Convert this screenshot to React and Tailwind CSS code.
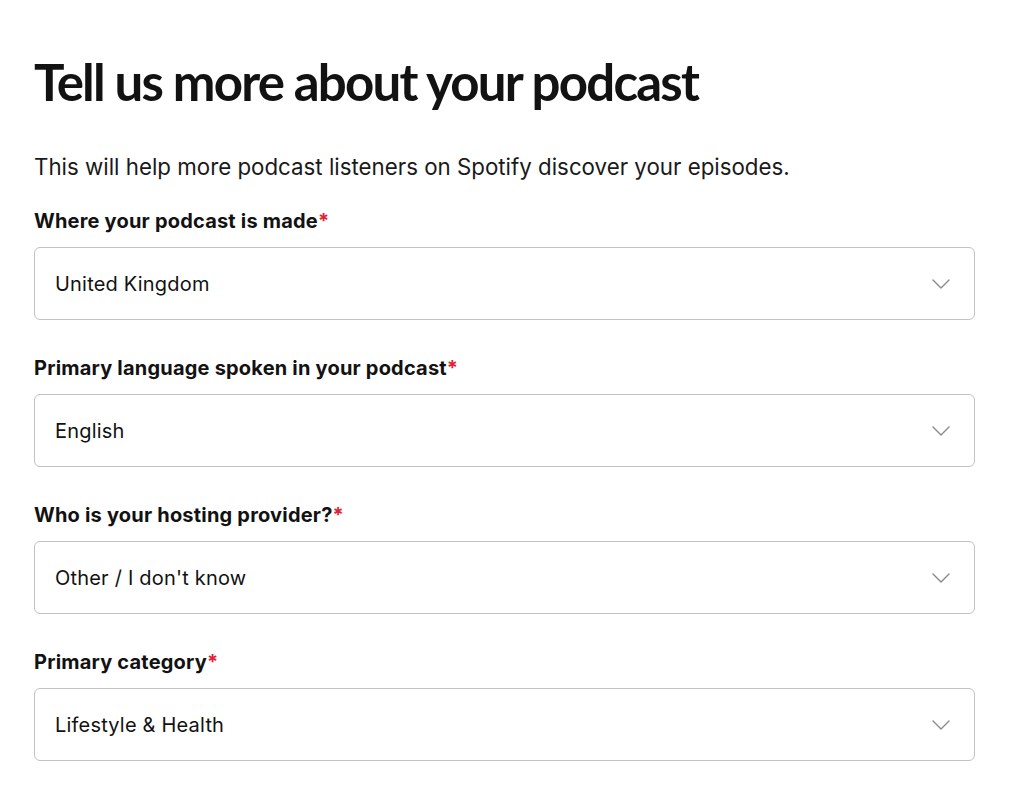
import React from "react";

const fields = [
  { label: "Where your podcast is made", value: "United Kingdom" },
  { label: "Primary language spoken in your podcast", value: "English" },
  { label: "Who is your hosting provider?", value: "Other / I don't know" },
  { label: "Primary category", value: "Lifestyle & Health" },
];

function Chevron() {
  return (
    <svg width="18" height="10" viewBox="0 0 18 10" fill="none">
      <path d="M1 1l8 8 8-8" stroke="#8a8a8a" strokeWidth="1.4" strokeLinecap="round" strokeLinejoin="round" />
    </svg>
  );
}

export default function App() {
  return (
    <div
      className="min-h-[791px] w-[1024px] bg-white pl-[34px] pr-[49px] pt-[52px] text-[#121212]"
      style={{ fontFamily: "Inter, 'Noto Sans', sans-serif" }}
    >
      <h1
        className="text-[51px] font-bold leading-[60px] tracking-[-0.035em]"
        style={{ fontFamily: "Lato, Inter, sans-serif" }}
      >
        Tell us more about your podcast
      </h1>
      <p className="mt-[41px] text-[22.3px] leading-[28px] text-[#1a1a1a]">
        This will help more podcast listeners on Spotify discover your episodes.
      </p>
      <div className="mt-[27px] flex flex-col gap-[35px]">
        {fields.map((f) => (
          <div key={f.label} className="flex flex-col gap-[13px]">
            <div className="text-[20px] font-bold leading-[26px] tracking-[0.01em] text-[#121212]">
              {f.label}
              <span className="text-[#e22134]">*</span>
            </div>
            <div className="flex h-[73px] items-center justify-between rounded-[6px] border border-[#c2c2c2] pl-[20px] pr-[24px]">
              <span className="text-[20px] tracking-[0.01em] text-[#121212]">{f.value}</span>
              <Chevron />
            </div>
          </div>
        ))}
      </div>
    </div>
  );
}
